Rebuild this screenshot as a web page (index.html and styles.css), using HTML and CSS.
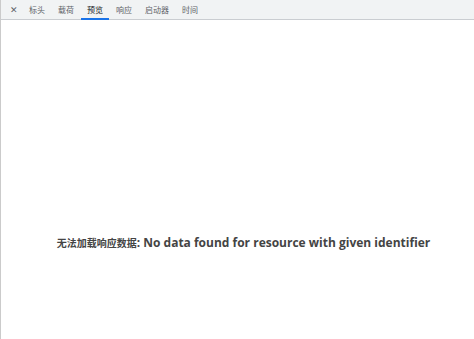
FILE: index.html
```html
<!DOCTYPE html>
<html lang="zh-CN">
<head>
    <meta charset="UTF-8">
    <title>预览</title>
    <link rel="stylesheet" href="styles.css">
</head>
<body>
    <div class="panel">
        <div class="tabbar">
            <span class="close">&#x2715;</span>
            <span class="tab">标头</span>
            <span class="tab">载荷</span>
            <span class="tab active">预览</span>
            <span class="tab">响应</span>
            <span class="tab">启动器</span>
            <span class="tab">时间</span>
        </div>
        <div class="preview">
            <div class="empty"><span class="cjk">无法加载响应数据</span>: No data found for resource with given identifier</div>
        </div>
    </div>
</body>
</html>
```

FILE: styles.css
```css
html, body {
    margin: 0;
    height: 100%;
    background: #fff;
}

body {
    font-family: "Open Sans", "Noto Sans CJK SC", sans-serif;
    overflow: hidden;
}

.panel {
    height: 100%;
    display: flex;
    flex-direction: column;
    border-left: 1px solid #cbcbcb;
    box-sizing: border-box;
}

.tabbar {
    display: flex;
    align-items: stretch;
    height: 19px;
    background: #f1f3f4;
    border-bottom: 1px solid #cacdd1;
    padding-left: 6px;
}

.close {
    display: flex;
    align-items: center;
    font-size: 9px;
    color: #5f6368;
    padding: 0 5px 0 3px;
}

.tab {
    display: flex;
    align-items: center;
    font-size: 8px;
    color: #5f6368;
    padding: 0 6px;
    margin-right: 1px;
    border-bottom: 2px solid transparent;
    margin-bottom: -1px;
}

.tab.active {
    color: #202124;
    border-bottom-color: #1a73e8;
}

.preview {
    flex: 1;
    display: flex;
    justify-content: center;
    padding: 214px 0 0 12px;
}

.empty {
    font-size: 12px;
    font-weight: bold;
    color: #444;
}

.empty .cjk {
    font-size: 10px;
}
```
